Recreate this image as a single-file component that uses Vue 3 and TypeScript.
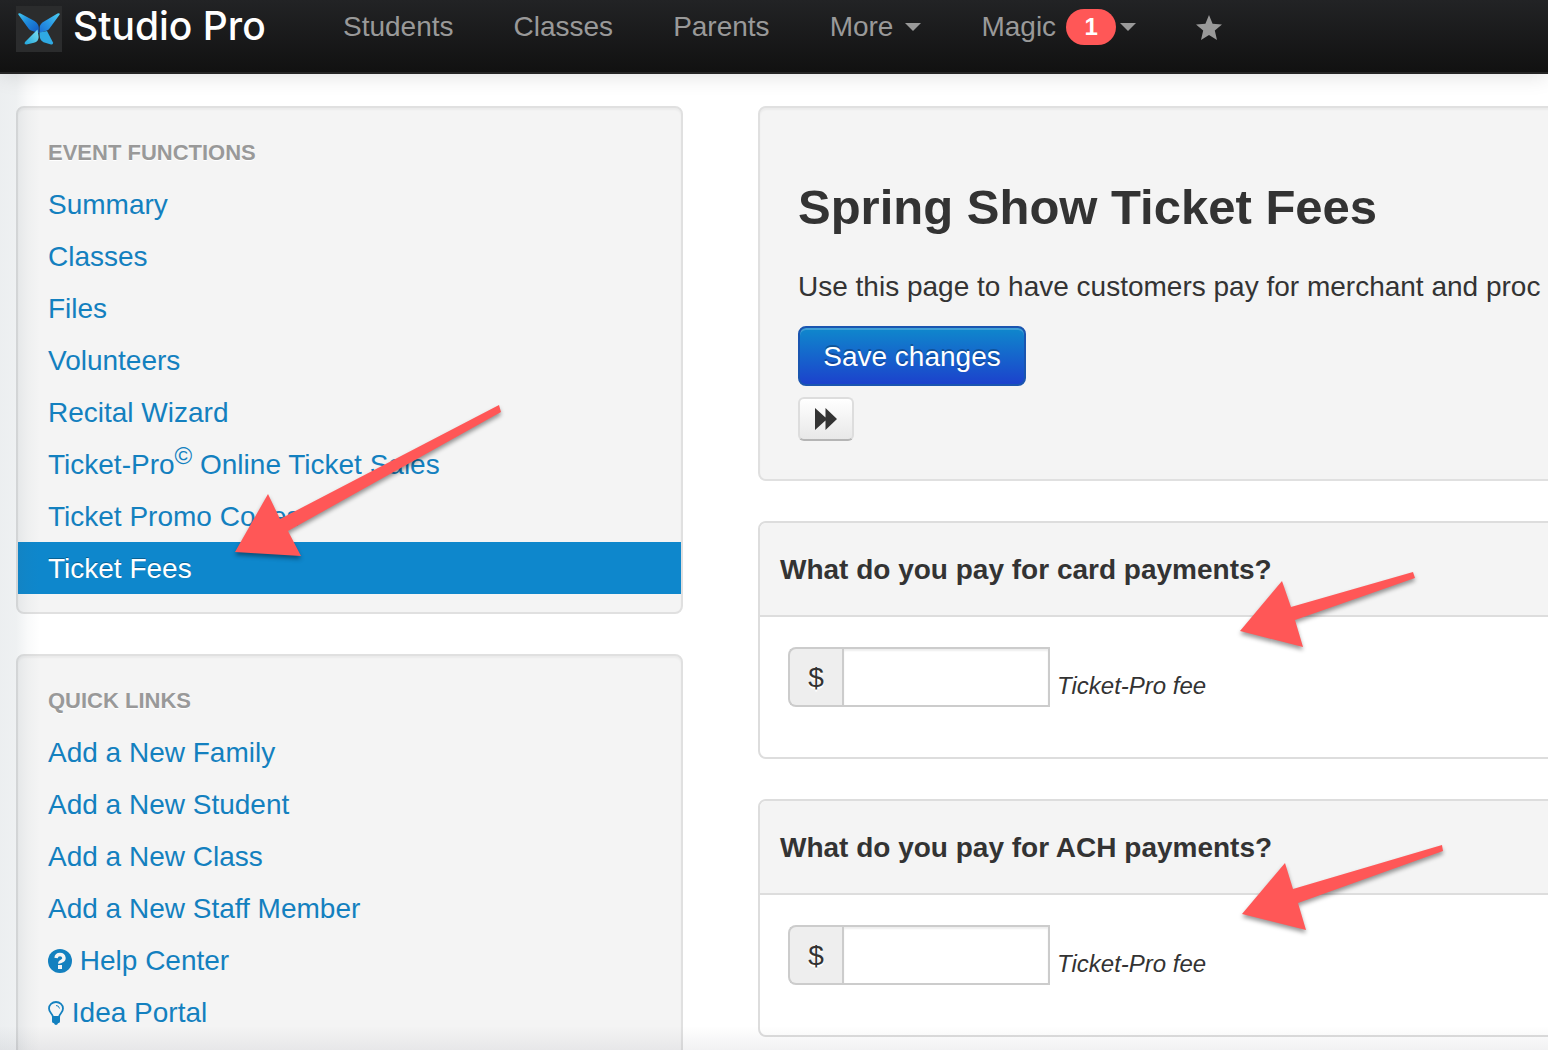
<script setup lang="ts">
import { ref } from 'vue'

interface NavItem {
  label: string
  caret?: boolean
  badge?: number
}

interface FunctionLink {
  label: string
  mark?: string
  rest?: string
  active?: boolean
}

interface QuickLink {
  label: string
  icon?: 'help' | 'idea'
}

interface FeeCard {
  id: string
  title: string
}

const navItems: NavItem[] = [
  { label: 'Students' },
  { label: 'Classes' },
  { label: 'Parents' },
  { label: 'More', caret: true },
  { label: 'Magic', caret: true, badge: 1 },
]

const functionLinks: FunctionLink[] = [
  { label: 'Summary' },
  { label: 'Classes' },
  { label: 'Files' },
  { label: 'Volunteers' },
  { label: 'Recital Wizard' },
  { label: 'Ticket-Pro', mark: '©', rest: ' Online Ticket Sales' },
  { label: 'Ticket Promo Codes' },
  { label: 'Ticket Fees', active: true },
]

const quickLinks: QuickLink[] = [
  { label: 'Add a New Family' },
  { label: 'Add a New Student' },
  { label: 'Add a New Class' },
  { label: 'Add a New Staff Member' },
  { label: 'Help Center', icon: 'help' },
  { label: 'Idea Portal', icon: 'idea' },
]

const feeCards: FeeCard[] = [
  { id: 'card', title: 'What do you pay for card payments?' },
  { id: 'ach', title: 'What do you pay for ACH payments?' },
]

const fees = ref<Record<string, string>>({ card: '', ach: '' })

const arrows: string[] = [
  '235,552 268,494 280,519 499,405 501,412 288,531 301,556',
  '1240,631 1282,581 1291,607 1413,572 1415,578 1295,620 1303,647',
  '1242,914 1285,863 1293,889 1442,845 1443,851 1298,903 1306,930',
]
</script>

<template>
  <div class="page">
    <header class="navbar">
      <a class="brand" href="#">
        <svg class="logo" viewBox="0 0 46 46" aria-hidden="true">
          <defs>
            <linearGradient id="wing" x1="0" y1="0" x2="1" y2="1">
              <stop offset="0" stop-color="#45c8ee" />
              <stop offset="0.4" stop-color="#1f8ede" />
              <stop offset="1" stop-color="#1258c4" />
            </linearGradient>
            <linearGradient id="wing-right" x1="1" y1="0" x2="0" y2="1">
              <stop offset="0" stop-color="#4fd0f2" />
              <stop offset="0.5" stop-color="#2a9ae4" />
              <stop offset="1" stop-color="#1a6fd4" />
            </linearGradient>
            <linearGradient id="tail" x1="1" y1="0" x2="0" y2="1">
              <stop offset="0" stop-color="#7fe0f0" />
              <stop offset="1" stop-color="#1fa5dc" />
            </linearGradient>
          </defs>
          <rect width="46" height="46" fill="#2b2c2d" />
          <path d="M2.300 8.500Q2 6.500 4.500 7.500L18.500 15Q22.800 18 22.800 22V27L15 24.500Q13.500 24 12.500 22.500Z" fill="url(#wing)" />
          <path d="M43.700 8.500Q44 6.500 41.500 7.500L28 15.500Q23.600 18 23.600 22V27L31 24.500Q32.500 24 33.500 22.500Z" fill="url(#wing-right)" />
          <path d="M21.500 23.500L9 36Q7.800 38.500 10.500 38.500L18 36.800Q22.500 35.500 22.700 31Z" fill="url(#tail)" />
          <path d="M31 25L37 36.500Q37.500 39 35 38.500L27.500 36.200Q23.800 34.500 23.600 29V26.500Z" fill="#2fa9e2" />
        </svg>
        <span class="brand-name">Studio Pro</span>
      </a>
      <nav class="menu">
        <a v-for="item in navItems" :key="item.label" class="menu-link" href="#">
          {{ item.label }}
          <span v-if="item.badge" class="badge">{{ item.badge }}</span>
          <span v-if="item.caret" class="caret" :class="{ snug: item.badge }"></span>
        </a>
        <a class="menu-link" href="#" aria-label="Favorites">
          <svg class="star" viewBox="0 0 26 25" aria-hidden="true">
            <path d="M13 0l3.600 8.700 9.400.7-7.200 6.100L21 25l-8-5-8 5 2.200-9.500L0 9.400l9.400-.7z" />
          </svg>
        </a>
      </nav>
    </header>

    <div class="columns">
      <aside class="sidebar">
        <section class="well">
          <h2 class="well-title">EVENT FUNCTIONS</h2>
          <ul>
            <li v-for="link in functionLinks" :key="link.label">
              <a class="side-link" :class="{ active: link.active }" href="#">{{ link.label }}<sup v-if="link.mark">{{ link.mark }}</sup>{{ link.rest }}</a>
            </li>
          </ul>
        </section>
        <section class="well">
          <h2 class="well-title">QUICK LINKS</h2>
          <ul>
            <li v-for="link in quickLinks" :key="link.label">
              <a class="side-link" href="#">
                <svg v-if="link.icon === 'help'" class="help-icon" viewBox="0 0 24 24" aria-hidden="true">
                  <circle cx="12" cy="12" r="12" fill="currentColor" />
                  <path d="M8 9Q8.500 5.500 12 5.500T16 9Q16 11 13.800 12T12 14.500" fill="none" stroke="#f4f4f4" stroke-width="3.400" />
                  <rect x="10" y="16" width="4" height="4" fill="#f4f4f4" />
                </svg>
                <svg v-if="link.icon === 'idea'" class="idea-icon" viewBox="0 0 16 24" aria-hidden="true">
                  <path d="M5 16C4.500 12.500 1 11.500 1 7.500A7 6.500 0 0 1 15 7.500C15 11.500 11.500 12.500 11 16Z" fill="none" stroke="currentColor" stroke-width="1.800" />
                  <path d="M8 4.500Q11 4.500 11.500 7.500" fill="none" stroke="currentColor" stroke-width="1" />
                  <path d="M4 16h8v4.500q0 1.500-2 1.800Q9.500 24 8 24t-2-1.700Q4 22 4 20.500Z" fill="currentColor" />
                </svg>
                {{ link.label }}
              </a>
            </li>
          </ul>
        </section>
      </aside>

      <main class="content">
        <section class="intro">
          <h1>Spring Show Ticket Fees</h1>
          <p>Use this page to have customers pay for merchant and proc</p>
          <button class="save" type="button">Save changes</button>
          <button class="forward" type="button" aria-label="Next">
            <svg viewBox="0 0 24 24" aria-hidden="true">
              <path d="M1 1l10.500 9.500V1L23 12 11.500 23v-9.500L1 23z" fill="#333" />
            </svg>
          </button>
        </section>

        <section v-for="card in feeCards" :key="card.id" class="card">
          <h3>{{ card.title }}</h3>
          <div class="card-body">
            <div class="money">
              <span class="currency">$</span>
              <input :id="card.id" v-model="fees[card.id]" type="text" />
            </div>
            <label :for="card.id">Ticket-Pro fee</label>
          </div>
        </section>
      </main>
    </div>

    <svg class="arrows" aria-hidden="true">
      <polygon v-for="points in arrows" :key="points" :points="points" />
    </svg>
  </div>
</template>

<style>
body {
  margin: 0;
  background: #fff;
}
</style>

<style scoped>
.page {
  position: relative;
  height: 100vh;
  overflow: hidden;
  font-family: "Liberation Sans", Arial, sans-serif;
  font-size: 28px;
  line-height: 40px;
  color: #333;
}

/* soft shade along the left and bottom window edges */
.page::before,
.page::after {
  content: "";
  position: absolute;
  z-index: 2;
  pointer-events: none;
  left: 0;
  bottom: 0;
}

.page::before {
  top: 74px;
  width: 40px;
  background: linear-gradient(to right, rgba(70, 95, 110, 0.1) 0, rgba(70, 95, 110, 0.09) 16px, rgba(70, 95, 110, 0.03) 28px, transparent);
}

.page::after {
  right: 0;
  height: 24px;
  background: linear-gradient(to top, rgba(60, 60, 80, 0.07), transparent);
}

.navbar {
  display: flex;
  align-items: flex-start;
  box-sizing: border-box;
  height: 74px;
  padding: 6px 16px 0;
  border-bottom: 2px solid #252525;
  background: linear-gradient(#222325, #111);
  box-shadow: 0 2px 20px rgba(0, 0, 0, 0.12);
}

.brand {
  display: flex;
  gap: 11px;
  width: 327px;
  color: #fff;
  text-decoration: none;
}

.logo {
  width: 46px;
  height: 46px;
}

.brand-name {
  font-family: Inter, sans-serif;
  font-size: 39px;
  font-weight: 500;
  line-height: 40px;
  white-space: nowrap;
}

.menu {
  display: flex;
  gap: 60px;
}

.menu-link {
  display: flex;
  align-items: center;
  height: 42px;
  color: #999;
  text-decoration: none;
}

.badge {
  width: 50px;
  height: 36px;
  margin-left: 10px;
  border-radius: 18px;
  background: #ff5757;
  color: #fff;
  font-size: 24px;
  font-weight: 700;
  line-height: 36px;
  text-align: center;
}

.caret {
  margin-left: 12px;
  border: 8px solid transparent;
  border-top-color: #999;
  border-bottom: 0;
}

.caret.snug {
  margin-left: 4px;
}

.star {
  width: 26px;
  height: 25px;
  fill: #999;
}

.columns {
  display: grid;
  grid-template-columns: minmax(0, 667fr) minmax(0, 810fr);
  gap: 75px;
  margin: 32px -20px 0 16px;
}

.well,
.intro,
.card {
  box-sizing: border-box;
  margin-bottom: 40px;
  border: 2px solid #e0e0e0;
  border-radius: 8px;
}

.well {
  padding: 18px 0;
  background: #f4f4f4;
  box-shadow: inset 0 2px 2px rgba(0, 0, 0, 0.04);
}

.well-title {
  margin: 0;
  padding: 2px 30px 0;
  color: #999;
  font-size: 22px;
  line-height: 50px;
  text-shadow: 0 1px 0 #fff;
}

ul {
  margin: 0;
  padding: 0;
  list-style: none;
}

.side-link {
  display: block;
  padding: 2px 30px 0;
  color: #1380bf;
  line-height: 50px;
  text-decoration: none;
  white-space: nowrap;
}

.side-link.active {
  background: #0e87cc;
  color: #fff;
  text-shadow: 0 -1px 0 rgba(0, 0, 0, 0.3);
}

sup {
  font-size: 24px;
  line-height: 0;
}

.help-icon {
  width: 24px;
  height: 24px;
  vertical-align: -3px;
}

.idea-icon {
  width: 16px;
  height: 24px;
  vertical-align: -3px;
}

.intro {
  display: flex;
  flex-direction: column;
  align-items: flex-start;
  padding: 59px 38px 38px;
  background: #f4f4f4;
  box-shadow: inset 0 2px 2px rgba(0, 0, 0, 0.04);
}

h1 {
  margin: 0;
  font-size: 49px;
  line-height: 80px;
  white-space: nowrap;
}

.intro p {
  margin: 20px 0 19px;
  white-space: nowrap;
}

button {
  box-sizing: border-box;
  padding: 0;
  font-family: inherit;
}

.save {
  width: 228px;
  height: 60px;
  padding-top: 2px;
  border: 2px solid #1a55b0;
  border-radius: 8px;
  background: linear-gradient(#0f88cc, #1c42cc);
  box-shadow: inset 0 2px 0 rgba(255, 255, 255, 0.2);
  color: #fff;
  font-size: 28px;
  text-shadow: 0 -2px 0 rgba(0, 0, 0, 0.25);
}

.forward {
  display: flex;
  align-items: center;
  justify-content: center;
  width: 56px;
  height: 44px;
  margin-top: 11px;
  border: 2px solid #ddd;
  border-bottom-color: #b5b5b5;
  border-radius: 6px;
  background: linear-gradient(#fff, #e8e8e8);
}

.forward svg {
  width: 24px;
  height: 24px;
}

.card {
  background: #fff;
  border-color: #ddd;
}

h3 {
  margin: 0;
  padding: 27px 20px 25px;
  border-bottom: 2px solid #ddd;
  border-radius: 6px 6px 0 0;
  background: #f4f4f4;
  font-size: 28px;
  line-height: 40px;
  white-space: nowrap;
}

.card-body {
  display: flex;
  align-items: flex-end;
  gap: 7px;
  padding: 30px 28px 50px;
}

.money {
  display: flex;
}

.currency {
  box-sizing: border-box;
  width: 54px;
  height: 60px;
  border: 2px solid #ccc;
  border-right: 0;
  border-radius: 8px 0 0 8px;
  background: #eee;
  line-height: 58px;
  text-align: center;
  text-shadow: 0 2px 0 #fff;
}

input {
  box-sizing: border-box;
  width: 208px;
  height: 60px;
  padding: 8px 12px;
  border: 2px solid #ccc;
  border-radius: 0;
  background: #fff;
  box-shadow: inset 0 2px 2px rgba(0, 0, 0, 0.07);
  color: #555;
  font: inherit;
}

label {
  font-size: 24px;
  font-style: italic;
  line-height: 42px;
}

/* callout arrows drawn over the page */
.arrows {
  position: absolute;
  z-index: 3;
  top: 0;
  left: 0;
  width: 100%;
  height: 100%;
  fill: #ff5757;
  filter: drop-shadow(0 3px 2px rgba(0, 0, 0, 0.4));
  pointer-events: none;
}
</style>
